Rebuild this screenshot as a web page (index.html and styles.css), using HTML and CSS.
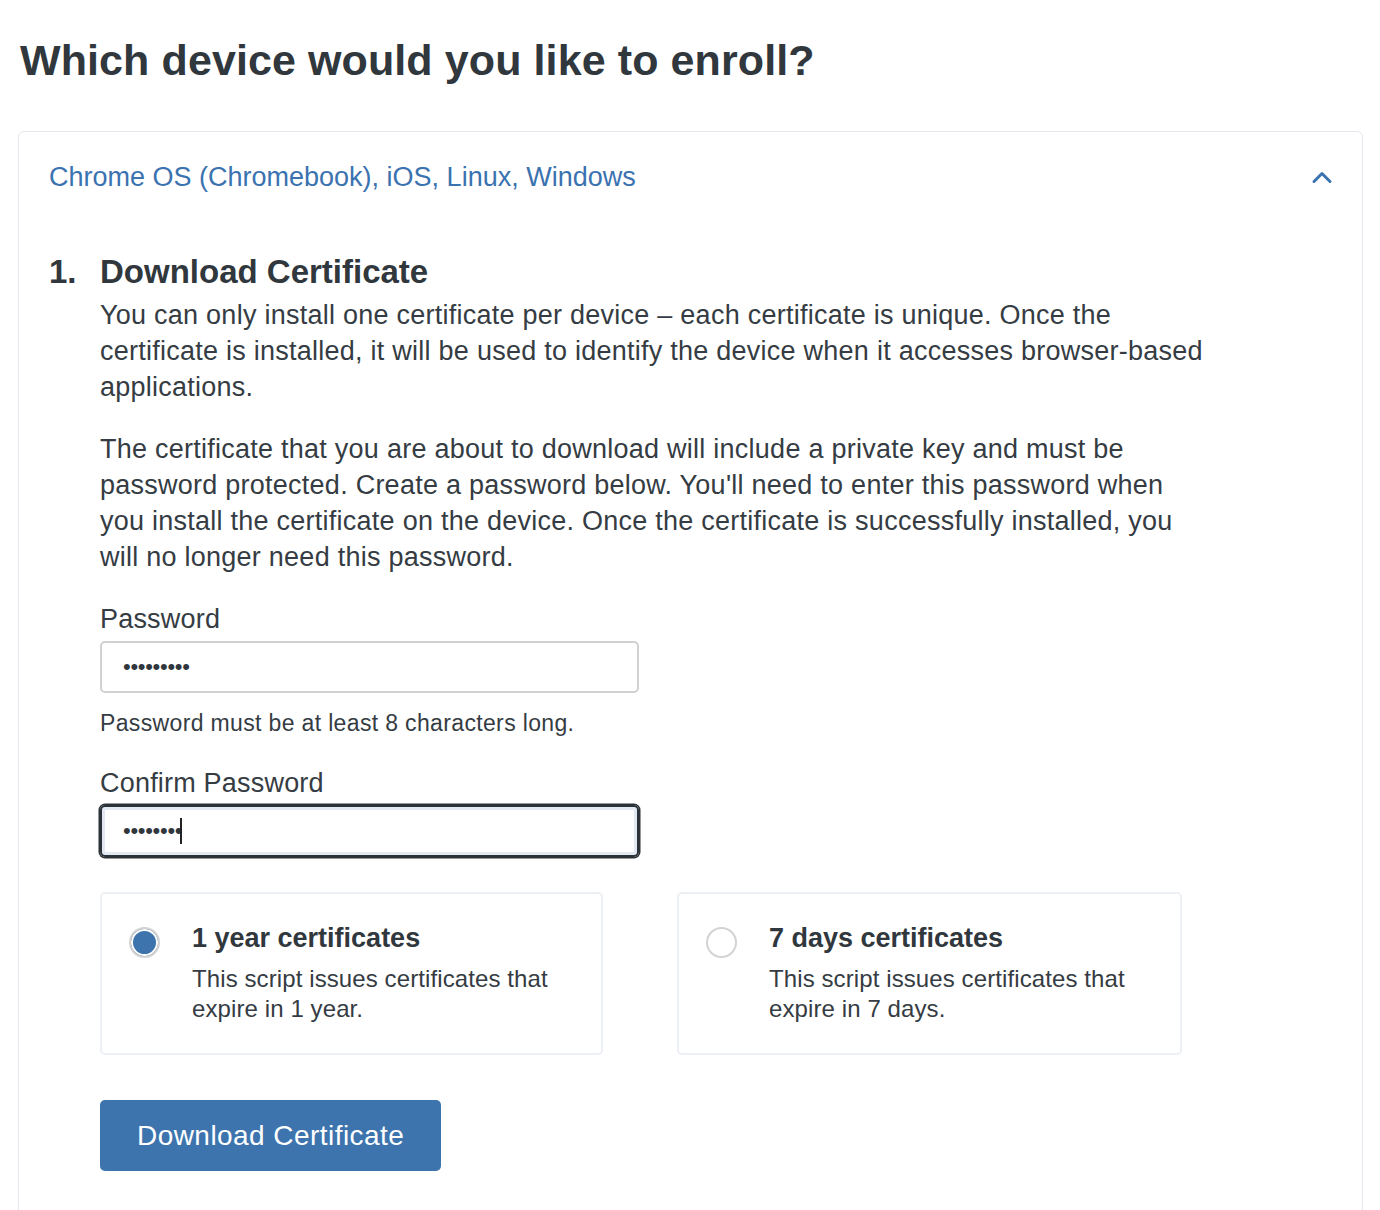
FILE: index.html
```html
<!DOCTYPE html>
<html lang="en">
<head>
    <meta charset="UTF-8">
    <meta name="viewport" content="width=device-width, initial-scale=1.0">
    <title>Enroll Device</title>
    <link rel="stylesheet" href="styles.css">
</head>
<body>

    <h1>Which device would you like to enroll?</h1>

    <div class="panel">
        <div class="panel-header">
            <a href="#" class="panel-title">Chrome OS (Chromebook), iOS, Linux, Windows</a>
            <svg class="chevron" width="22" height="14" viewBox="0 0 22 14">
                <path d="M3 11.5 L11 3.5 L19 11.5" fill="none" stroke="#3b72b0" stroke-width="3" stroke-linecap="round" stroke-linejoin="round"/>
            </svg>
        </div>

        <div class="panel-body">
            <div class="step">
                <div class="step-num">1.</div>
                <div class="step-content">
                    <h2>Download Certificate</h2>
                    <p>You can only install one certificate per device – each certificate is unique. Once the certificate is installed, it will be used to identify the device when it accesses browser&#8209;based applications.</p>
                    <p>The certificate that you are about to download will include a private key and must be password protected. Create a password below. You'll need to enter this password when you install the certificate on the device. Once the certificate is successfully installed, you will no longer need this password.</p>

                    <label class="field-label">Password</label>
                    <div class="field"><span class="dots">•••••••••</span></div>
                    <div class="help">Password must be at least 8 characters long.</div>

                    <label class="field-label confirm">Confirm Password</label>
                    <div class="field focused"><span class="dots">••••••••</span><span class="caret"></span></div>

                    <div class="options">
                        <div class="option">
                            <span class="radio checked"></span>
                            <div>
                                <div class="option-title">1 year certificates</div>
                                <div class="option-desc">This script issues certificates that expire in 1 year.</div>
                            </div>
                        </div>
                        <div class="option">
                            <span class="radio"></span>
                            <div>
                                <div class="option-title">7 days certificates</div>
                                <div class="option-desc">This script issues certificates that expire in 7 days.</div>
                            </div>
                        </div>
                    </div>

                    <button class="btn">Download Certificate</button>
                </div>
            </div>
        </div>
    </div>

</body>
</html>
```

FILE: styles.css
```css
body {
    font-family: "Liberation Sans", Arial, sans-serif;
    color: #353c43;
    background: #fff;
    margin: 0;
    padding: 0 17px 0 18px;
}
h1 {
    font-size: 43px;
    font-weight: bold;
    line-height: 52px;
    color: #30373d;
    margin: 34px 0 45px 2px;
    letter-spacing: 0.1px;
}
.panel {
    border: 1px solid #e3e8ee;
    border-radius: 6px;
    padding-bottom: 80px;
}
.panel-header {
    display: flex;
    justify-content: space-between;
    align-items: center;
    padding: 27px 29px 21px 30px;
}
.panel-title {
    font-size: 27px;
    line-height: 36px;
    color: #3b72b0;
    text-decoration: none;
}
.chevron {
    display: block;
}
.panel-body {
    padding: 36px 30px 0 30px;
}
.step {
    display: flex;
}
.step-num {
    width: 51px;
    flex-shrink: 0;
    font-size: 33px;
    font-weight: bold;
    line-height: 40px;
    color: #30373d;
}
.step-content {
    max-width: 1115px;
}
h2 {
    font-size: 33px;
    line-height: 40px;
    color: #30373d;
    margin: 0 0 5px 0;
}
p {
    font-size: 27px;
    line-height: 36px;
    letter-spacing: 0.25px;
    margin: 0 0 26px 0;
}
.field-label {
    display: block;
    font-size: 27px;
    line-height: 36px;
    letter-spacing: 0.2px;
    margin-top: 24px;
    margin-bottom: 4px;
}
.field-label.confirm {
    margin-top: 27px;
}
.field {
    width: 539px;
    height: 52px;
    box-sizing: border-box;
    border: 2px solid #cfd1d3;
    border-radius: 5px;
    display: flex;
    align-items: center;
    padding-left: 21px;
}
.field.focused {
    border: 2px solid #2b3238;
    box-shadow: 0 0 0 1.5px #2b3238, inset 0 0 0 3px #e2e9f2;
}
.dots {
    font-size: 22px;
    letter-spacing: -0.3px;
    color: #30373d;
}
.caret {
    width: 2px;
    height: 26px;
    background: #222;
    margin-left: -2px;
}
.help {
    font-size: 23px;
    line-height: 30px;
    letter-spacing: 0.35px;
    margin-top: 15px;
}
.options {
    display: grid;
    grid-template-columns: 503px 505px;
    gap: 74px;
    margin-top: 35px;
}
.option {
    display: flex;
    align-items: flex-start;
    border: 2px solid #eceff3;
    border-radius: 5px;
    padding: 27px 20px 29px 27px;
}
.radio {
    width: 31px;
    height: 31px;
    box-sizing: border-box;
    border: 2px solid #d3d3d3;
    border-radius: 50%;
    flex-shrink: 0;
    margin-top: 6px;
    margin-right: 32px;
    background: #fff;
}
.radio.checked {
    background: #3d74ae;
    box-shadow: inset 0 0 0 2px #fff;
}
.option-title {
    font-size: 27px;
    font-weight: bold;
    line-height: 34px;
    color: #30373d;
}
.option-desc {
    font-size: 24px;
    line-height: 30px;
    letter-spacing: 0.1px;
    margin-top: 9px;
}
.btn {
    display: block;
    margin-top: 45px;
    background: #3d74ae;
    color: #fff;
    border: none;
    border-radius: 5px;
    font-family: "Liberation Sans", Arial, sans-serif;
    font-size: 28px;
    line-height: 35px;
    letter-spacing: 0.45px;
    padding: 18px 37px;
    cursor: pointer;
}
```
